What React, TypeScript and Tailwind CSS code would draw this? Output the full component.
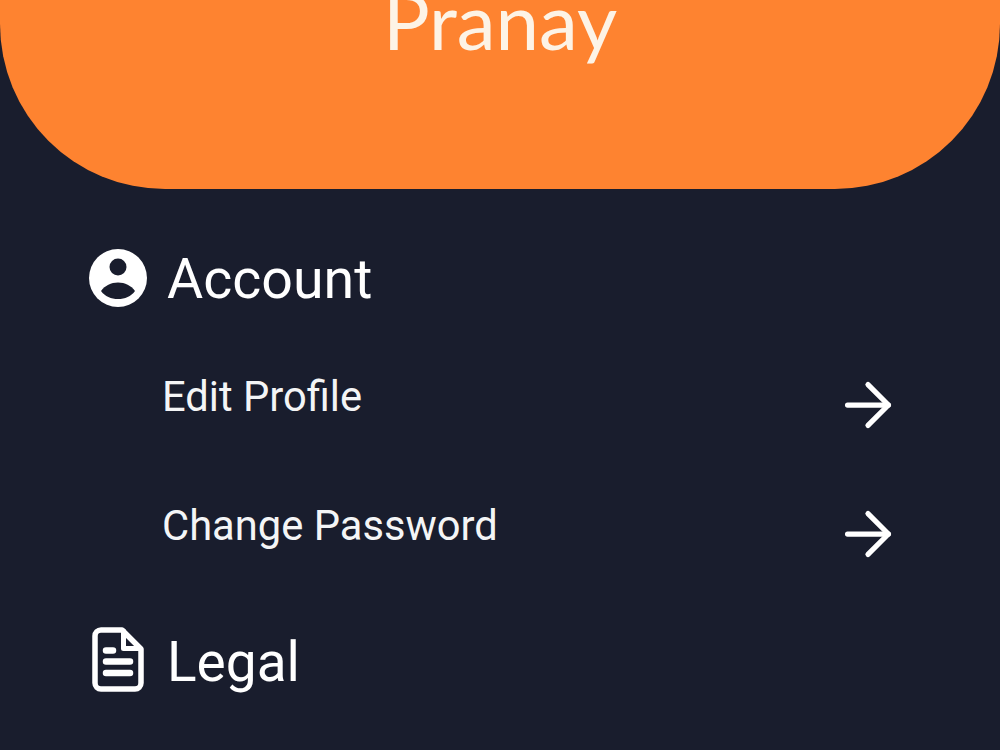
import { ArrowRight } from 'lucide-react';

function AccountIcon() {
  return (
    <svg viewBox="0 0 58 58" className="w-[58px] h-[58px] shrink-0">
      <circle cx="29" cy="29" r="29" fill="#ffffff" />
      <circle cx="29" cy="18" r="8.5" fill="#191d2d" />
      <path d="M12 42 C16 36.5 22 33.5 29 33.5 C36 33.5 42 36.5 46 42 C42 47.5 36 50 29 50 C22 50 16 47.5 12 42 Z" fill="#191d2d" />
    </svg>
  );
}

function LegalIcon() {
  return (
    <svg viewBox="0 0 52 65" className="w-[52px] h-[65px] shrink-0" fill="none" stroke="#ffffff" strokeLinecap="round" strokeLinejoin="round">
      <path d="M9 3 H30 L49 22 V56 a6 6 0 0 1 -6 6 H9 a6 6 0 0 1 -6 -6 V9 a6 6 0 0 1 6 -6 Z" strokeWidth="5.5" />
      <path d="M31.5 4 V21.5 H48" strokeWidth="5" />
      <path d="M14 23.5 H21 M14 34.5 H38 M14 46 H38" strokeWidth="6.5" />
    </svg>
  );
}

function SubRow({ label }: { label: string }) {
  return (
    <div className="flex items-start justify-between pl-[162px] pr-[97px] h-[129px]">
      <span className="text-[41.7px] leading-[48px] text-[#f4f5f6]">{label}</span>
      <ArrowRight className="w-[70px] h-[70px] -mt-[3px] text-white" strokeWidth={1.8} />
    </div>
  );
}

export default function App() {
  return (
    <div className="w-[1000px] h-[750px] overflow-hidden bg-[#191d2d] font-['Roboto',sans-serif]">
      {/* Orange header, name is cut off by the top of the page */}
      <div className="h-[189px] bg-[#fe8330] rounded-b-[165px] flex justify-center overflow-hidden">
        <span className="text-[78px] leading-[40px] text-[#fdf3e6] font-['Lato',sans-serif]">Pranay</span>
      </div>

      <div className="flex items-center gap-[20px] pl-[89px] mt-[60px] h-[58px]">
        <AccountIcon />
        <span className="text-[55.5px] leading-[58px] pt-[4px] text-white">Account</span>
      </div>

      <div className="mt-[66px]">
        <SubRow label="Edit Profile" />
        <SubRow label="Change Password" />
      </div>

      <div className="flex items-center gap-[23px] pl-[92px] -mt-[4px] h-[65px]">
        <LegalIcon />
        <span className="text-[55px] leading-[58px] pt-[4px] text-white">Legal</span>
      </div>
    </div>
  );
}
